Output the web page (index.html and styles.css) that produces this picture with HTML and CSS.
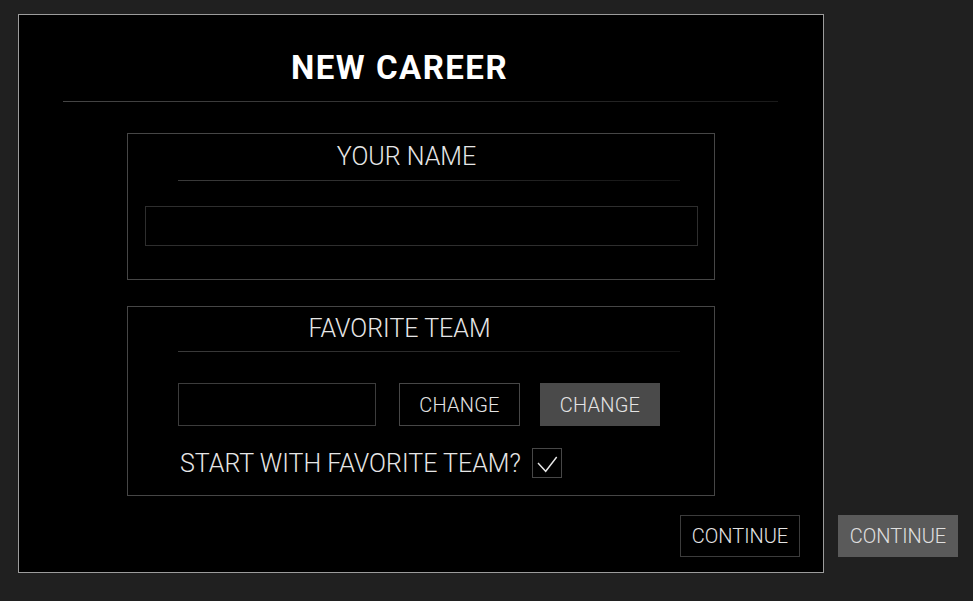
FILE: index.html
```html
<!DOCTYPE html>
<html>
<head>
<meta charset="utf-8">
<link rel="stylesheet" href="styles.css">
</head>
<body>
<div class="screen">
  <div class="panel">
    <h1 class="title">NEW CAREER</h1>
    <div class="rule title-rule"></div>

    <section class="group group-name">
      <div class="group-title name-title">YOUR NAME</div>
      <div class="rule group-rule"></div>
      <div class="name-input"></div>
    </section>

    <section class="group group-team">
      <div class="group-title team-title">FAVORITE TEAM</div>
      <div class="rule group-rule"></div>
      <div class="team-row">
        <div class="team-field"></div>
        <div class="btn btn-outline btn-change">CHANGE</div>
        <div class="btn btn-filled btn-change2">CHANGE</div>
      </div>
      <div class="check-row">
        <span class="check-label">START WITH FAVORITE TEAM?</span>
        <span class="checkbox">
          <svg width="30" height="30" viewBox="0 0 30 30"><polyline points="6,15 13.7,23.3 24.7,9" fill="none" stroke="#e8e8e8" stroke-width="1.4"/></svg>
        </span>
      </div>
    </section>

    <div class="btn btn-outline btn-continue">CONTINUE</div>
  </div>
  <div class="btn btn-filled-light btn-continue-out">CONTINUE</div>
</div>
</body>
</html>
```

FILE: styles.css
```css
* { box-sizing: border-box; }
html, body { margin: 0; padding: 0; }
body {
  background: #202020;
  font-family: Roboto, "Liberation Sans", sans-serif;
  color: #e4e4e4;
  width: 973px;
  height: 601px;
  overflow: hidden;
}
.screen {
  display: flex;
  align-items: flex-start;
  gap: 14px;
  padding: 14px 0 0 18px;
}
.panel {
  width: 806px;
  height: 559px;
  background: #000;
  border: 1px solid #9c9c9c;
  display: flex;
  flex-direction: column;
  align-items: flex-start;
}
.title {
  margin: 33px 0 0 0;
  width: 761px;
  text-align: center;
  font-size: 33px;
  line-height: 40px;
  font-weight: 700;
  letter-spacing: 1.5px;
  color: #fff;
}
.rule {
  height: 1px;
  background: linear-gradient(to right, #454545, #2a2a2a 60%, #1a1a1a);
}
.title-rule {
  margin: 13px 0 0 44px;
  width: 715px;
}
.group {
  margin-left: 108px;
  width: 588px;
  border: 1px solid #464646;
  display: flex;
  flex-direction: column;
  align-items: flex-start;
}
.group-name {
  margin-top: 31px;
  height: 147px;
  padding-top: 8px;
}
.group-team {
  margin-top: 26px;
  height: 190px;
  padding-top: 7px;
}
.group-title {
  align-self: stretch;
  text-align: center;
  font-size: 25px;
  line-height: 30px;
  font-weight: 300;
  letter-spacing: 0;
  color: #e6e6e6;
}
.name-title { padding-right: 29px; }
.team-title { padding-right: 43px; }
.group-name .group-rule { margin-top: 8px; }
.group-team .group-rule { margin-top: 7px; }
.group-rule {
  margin: 9px 0 0 50px;
  width: 502px;
  background: linear-gradient(to right, #3a3a3a, #262626 60%, #141414);
}
.name-input {
  margin: 25px 0 0 17px;
  width: 553px;
  height: 40px;
  border: 1px solid #2e2e2e;
}
.team-row {
  display: flex;
  margin: 31px 0 0 50px;
}
.team-field {
  width: 198px;
  height: 43px;
  border: 1px solid #3c3c3c;
}
.btn {
  display: flex;
  align-items: center;
  justify-content: center;
  font-size: 20px;
  font-weight: 300;
  letter-spacing: 0.2px;
  color: #e4e4e4;
}
.btn-outline { border: 1px solid #474747; }
.btn-filled { background: #4a4a4a; }
.btn-filled-light { background: #5a5a5a; color: #e0e0e0; }
.btn-change {
  margin-left: 23px;
  width: 121px;
  height: 43px;
}
.btn-change2 {
  margin-left: 20px;
  width: 120px;
  height: 43px;
}
.check-row {
  display: flex;
  align-items: center;
  margin: 22px 0 0 52px;
}
.check-label {
  font-size: 25px;
  font-weight: 300;
  letter-spacing: 0;
  color: #e6e6e6;
}
.checkbox {
  margin-left: 11px;
  width: 30px;
  height: 30px;
  border: 1px solid #474747;
  position: relative;
}
.checkbox svg {
  position: absolute;
  left: -1px;
  top: -1px;
}
.btn-continue {
  margin: 19px 0 0 661px;
  width: 120px;
  height: 42px;
  border-color: #3c3c3c;
  letter-spacing: 0;
}
.btn-continue-out {
  margin-top: 501px;
  width: 120px;
  height: 42px;
  letter-spacing: 0;
}
```
